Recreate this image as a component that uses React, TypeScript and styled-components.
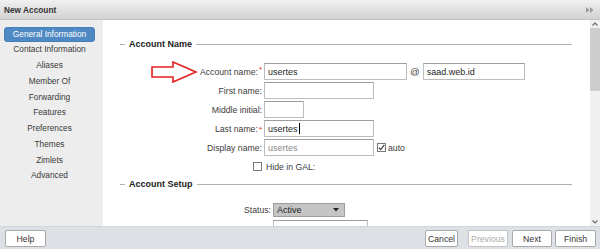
import styled, { createGlobalStyle } from 'styled-components';

const GlobalStyle = createGlobalStyle`
  html, body {
    margin: 0;
    padding: 0;
  }
  body {
    font-family: 'Liberation Sans', Arial, sans-serif;
    font-size: 8.7px;
    color: #333;
  }
  * {
    box-sizing: border-box;
  }
`;

const Dialog = styled.div`
  width: 600px;
  height: 249px;
  display: flex;
  flex-direction: column;
  overflow: hidden;
  background: #fff;
`;

const TitleBar = styled.div`
  height: 20px;
  flex: none;
  display: flex;
  align-items: center;
  justify-content: space-between;
  padding: 0 6px 0 4px;
  background: linear-gradient(#f1f1f1, #d2d2d2);
  border-bottom: 1px solid #c2c2c2;
`;

const Title = styled.span`
  font-weight: bold;
  font-size: 8.3px;
  color: #333;
`;

const Body = styled.div`
  flex: 1;
  min-height: 0;
  display: flex;
`;

const Sidebar = styled.nav`
  width: 103px;
  flex: none;
  background: #ededed;
  padding-top: 6.5px;
  display: flex;
  flex-direction: column;
`;

const NavItem = styled.div<{ $active?: boolean }>`
  height: 15.75px;
  flex: none;
  margin: 0 8px 0 4px;
  text-align: center;
  border-radius: 3px;
  font-size: 8.3px;
  color: ${(p) => (p.$active ? '#fff' : '#3a3a3a')};
  background: ${(p) => (p.$active ? '#4f89c3' : 'transparent')};
  border: ${(p) => (p.$active ? '1px solid #4680bb' : '1px solid transparent')};
  line-height: 13.75px;
  white-space: nowrap;
`;

const Content = styled.div`
  flex: 1;
  min-width: 0;
  padding: 18px 18px 0 17px;
  overflow: hidden;
`;

const SectionHead = styled.div<{ $gapTop?: number; $gapBottom?: number }>`
  display: flex;
  align-items: center;
  gap: 4px;
  height: 12px;
  margin-top: ${(p) => p.$gapTop ?? 0}px;
  margin-bottom: ${(p) => p.$gapBottom ?? 13}px;
  font-weight: bold;
  font-size: 9px;
  color: #222;
  &::before {
    content: '';
    width: 5px;
    border-top: 1px solid #b0b0b0;
  }
  &::after {
    content: '';
    flex: 1;
    border-top: 1px solid #b0b0b0;
  }
`;

const Form = styled.div`
  display: flex;
  flex-direction: column;
  gap: 2px;
`;

const Row = styled.div`
  display: flex;
  align-items: center;
  min-height: 17px;
`;

const Label = styled.div<{ $w: number }>`
  width: ${(p) => p.$w}px;
  flex: none;
  display: flex;
  justify-content: flex-end;
  align-items: center;
  padding-right: 1px;
  margin-right: 1px;
  color: #3c3c3c;
  white-space: nowrap;
`;

const Req = styled.span`
  color: #d22;
  font-size: 8px;
  align-self: flex-start;
  margin-top: 1px;
  margin-left: 1px;
`;

const Field = styled.div<{ $w: number; $muted?: boolean; $h?: number }>`
  width: ${(p) => p.$w}px;
  height: ${(p) => p.$h ?? 17}px;
  flex: none;
  display: flex;
  align-items: center;
  padding-left: 3px;
  border: 1px solid #bdbdbd;
  border-top-color: #9c9c9c;
  background: #fff;
  color: ${(p) => (p.$muted ? '#8a8a8a' : '#1e1e1e')};
  font-size: 9px;
`;

const Caret = styled.span`
  width: 1px;
  height: 11px;
  background: #000;
  margin-left: 1px;
`;

const At = styled.span`
  margin: 0 3px;
  color: #444;
  font-size: 9.5px;
`;

const Check = styled.span<{ $ml?: number }>`
  width: 9px;
  height: 9px;
  flex: none;
  border: 1px solid #7a7a7a;
  background: #fff;
  margin-left: ${(p) => p.$ml ?? 0}px;
  display: inline-flex;
  align-items: center;
  justify-content: center;
`;

const CheckText = styled.span`
  margin-left: 2px;
  color: #3c3c3c;
`;

const Select = styled.div`
  width: 72px;
  height: 14px;
  display: flex;
  align-items: center;
  justify-content: space-between;
  padding: 0 5px 0 3px;
  background: #c5c5c5;
  border: 1px solid #9d9d9d;
  color: #1e1e1e;
  font-size: 9px;
`;

const Scrollbar = styled.div`
  width: 10px;
  flex: none;
  background: #f0f0f0;
  display: flex;
  flex-direction: column;
  align-items: center;
  padding: 2px 0;
`;

const Thumb = styled.div`
  width: 10px;
  height: 63px;
  margin-top: 2px;
  background: #cdcdcd;
`;

const Spacer = styled.div`
  flex: 1;
`;

const Footer = styled.div`
  height: 23px;
  flex: none;
  display: flex;
  align-items: flex-start;
  padding: 3px 4px 0 5px;
  background: #dde1e6;
  border-top: 1px solid #d3d7dc;
`;

const Buttons = styled.div`
  margin-left: auto;
  display: flex;
  gap: 3px;
`;

const Button = styled.button<{ $w: number; $mr?: number }>`
  width: ${(p) => p.$w}px;
  height: 17px;
  margin-right: ${(p) => p.$mr ?? 0}px;
  padding: 0;
  border: 1px solid #a9a9a9;
  border-radius: 2px;
  background: #fff;
  font-family: inherit;
  font-size: 8.7px;
  color: #333;
  &:disabled {
    color: #aaa;
    border-color: #c4c4c4;
  }
`;

const Chevron = ({ up }: { up?: boolean }) => (
  <svg width="6" height="4" viewBox="0 0 6 4">
    <path d={up ? 'M0.5 3.5 L3 1 L5.5 3.5' : 'M0.5 0.5 L3 3 L5.5 0.5'} fill="none" stroke="#666" strokeWidth="1.1" />
  </svg>
);

const RedArrow = () => (
  <svg width="47" height="22" viewBox="0 0 47 22" style={{ margin: '-3px 2px -3px 0' }}>
    <path d="M1 6 L22 6 L22 1 L45 11 L22 21 L22 16 L1 16 Z" fill="#fff" stroke="#e3221f" strokeWidth="1.6" strokeLinejoin="miter" />
  </svg>
);

const nav = [
  'General Information',
  'Contact Information',
  'Aliases',
  'Member Of',
  'Forwarding',
  'Features',
  'Preferences',
  'Themes',
  'Zimlets',
  'Advanced',
];

export default function App() {
  return (
    <>
      <GlobalStyle />
      <Dialog>
        <TitleBar>
          <Title>New Account</Title>
          <svg width="8" height="6" viewBox="0 0 8 6">
            <path d="M0 0 L3.5 3 L0 6 Z M4 0 L7.5 3 L4 6 Z" fill="#9a9a9a" />
          </svg>
        </TitleBar>
        <Body>
          <Sidebar>
            {nav.map((item, i) => (
              <NavItem key={item} $active={i === 0}>
                {item}
              </NavItem>
            ))}
          </Sidebar>
          <Content>
            <SectionHead>Account Name</SectionHead>
            <Form>
              <Row>
                <Label $w={143}>
                  <RedArrow />
                  Account name:<Req>*</Req>
                </Label>
                <Field $w={143}>usertes</Field>
                <At>@</At>
                <Field $w={102}>saad.web.id</Field>
              </Row>
              <Row>
                <Label $w={143}>First name:</Label>
                <Field $w={110} />
              </Row>
              <Row>
                <Label $w={143}>Middle initial:</Label>
                <Field $w={40} />
              </Row>
              <Row>
                <Label $w={143}>
                  Last name:<Req>*</Req>
                </Label>
                <Field $w={110}>
                  usertes
                  <Caret />
                </Field>
              </Row>
              <Row>
                <Label $w={143}>Display name:</Label>
                <Field $w={110} $muted>
                  usertes
                </Field>
                <Check $ml={3}>
                  <svg width="7" height="7" viewBox="0 0 7 7">
                    <path d="M0.8 3.6 L2.7 5.6 L6.3 0.8" fill="none" stroke="#333" strokeWidth="1.1" />
                  </svg>
                </Check>
                <CheckText>auto</CheckText>
              </Row>
              <Row>
                <Label $w={143}>
                  <Check />
                </Label>
                <CheckText>Hide in GAL:</CheckText>
              </Row>
            </Form>
            <SectionHead $gapTop={3} $gapBottom={11}>
              Account Setup
            </SectionHead>
            <Form>
              <Row>
                <Label $w={152}>Status:</Label>
                <Select>
                  Active
                  <svg width="6" height="4" viewBox="0 0 6 4">
                    <path d="M0 0 L6 0 L3 3.5 Z" fill="#222" />
                  </svg>
                </Select>
              </Row>
              <Row>
                <Label $w={152} />
                <Field $w={95} />
              </Row>
            </Form>
          </Content>
          <Scrollbar>
            <Chevron up />
            <Thumb />
            <Spacer />
            <Chevron />
          </Scrollbar>
        </Body>
        <Footer>
          <Button $w={41}>Help</Button>
          <Buttons>
            <Button $w={33} $mr={7}>
              Cancel
            </Button>
            <Button $w={40} disabled style={{ marginRight: 1 }}>
              Previous
            </Button>
            <Button $w={40}>Next</Button>
            <Button $w={41}>Finish</Button>
          </Buttons>
        </Footer>
      </Dialog>
    </>
  );
}
